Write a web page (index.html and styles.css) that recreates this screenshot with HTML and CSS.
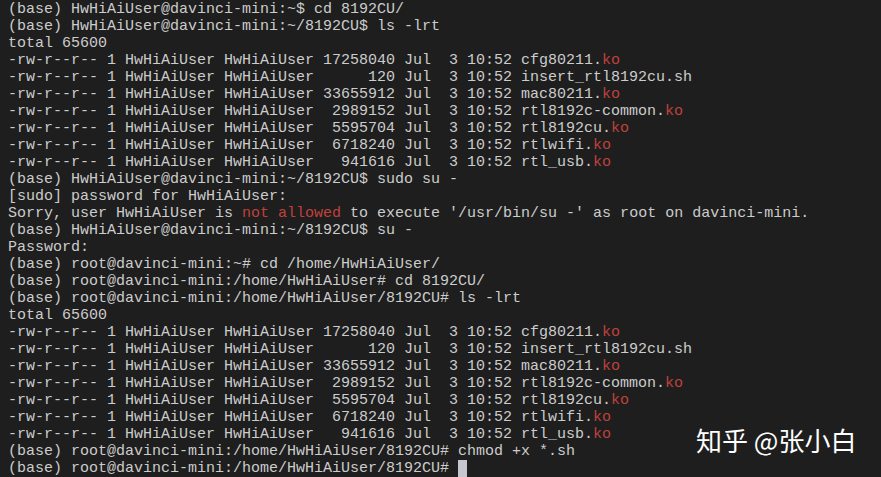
FILE: index.html
```html
<!DOCTYPE html>
<html>
<head>
<meta charset="utf-8">
<link rel="stylesheet" href="styles.css">
</head>
<body>
<div class="term">
<pre class="out">(base) HwHiAiUser@davinci-mini:~$ cd 8192CU/
(base) HwHiAiUser@davinci-mini:~/8192CU$ ls -lrt
total 65600
-rw-r--r-- 1 HwHiAiUser HwHiAiUser 17258040 Jul  3 10:52 cfg80211.<span class="red">ko</span>
-rw-r--r-- 1 HwHiAiUser HwHiAiUser      120 Jul  3 10:52 insert_rtl8192cu.sh
-rw-r--r-- 1 HwHiAiUser HwHiAiUser 33655912 Jul  3 10:52 mac80211.<span class="red">ko</span>
-rw-r--r-- 1 HwHiAiUser HwHiAiUser  2989152 Jul  3 10:52 rtl8192c-common.<span class="red">ko</span>
-rw-r--r-- 1 HwHiAiUser HwHiAiUser  5595704 Jul  3 10:52 rtl8192cu.<span class="red">ko</span>
-rw-r--r-- 1 HwHiAiUser HwHiAiUser  6718240 Jul  3 10:52 rtlwifi.<span class="red">ko</span>
-rw-r--r-- 1 HwHiAiUser HwHiAiUser   941616 Jul  3 10:52 rtl_usb.<span class="red">ko</span>
(base) HwHiAiUser@davinci-mini:~/8192CU$ sudo su -
[sudo] password for HwHiAiUser:
Sorry, user HwHiAiUser is <span class="red">not allowed</span> to execute '/usr/bin/su -' as root on davinci-mini.
(base) HwHiAiUser@davinci-mini:~/8192CU$ su -
Password:
(base) root@davinci-mini:~# cd /home/HwHiAiUser/
(base) root@davinci-mini:/home/HwHiAiUser# cd 8192CU/
(base) root@davinci-mini:/home/HwHiAiUser/8192CU# ls -lrt
total 65600
-rw-r--r-- 1 HwHiAiUser HwHiAiUser 17258040 Jul  3 10:52 cfg80211.<span class="red">ko</span>
-rw-r--r-- 1 HwHiAiUser HwHiAiUser      120 Jul  3 10:52 insert_rtl8192cu.sh
-rw-r--r-- 1 HwHiAiUser HwHiAiUser 33655912 Jul  3 10:52 mac80211.<span class="red">ko</span>
-rw-r--r-- 1 HwHiAiUser HwHiAiUser  2989152 Jul  3 10:52 rtl8192c-common.<span class="red">ko</span>
-rw-r--r-- 1 HwHiAiUser HwHiAiUser  5595704 Jul  3 10:52 rtl8192cu.<span class="red">ko</span>
-rw-r--r-- 1 HwHiAiUser HwHiAiUser  6718240 Jul  3 10:52 rtlwifi.<span class="red">ko</span>
-rw-r--r-- 1 HwHiAiUser HwHiAiUser   941616 Jul  3 10:52 rtl_usb.<span class="red">ko</span>
(base) root@davinci-mini:/home/HwHiAiUser/8192CU# chmod +x *.sh
(base) root@davinci-mini:/home/HwHiAiUser/8192CU# <span class="cursor"> </span></pre>
<div class="mark">知乎 @张小白</div>
</div>
</body>
</html>
```
FILE: styles.css
```css
html, body {
  margin: 0;
  padding: 0;
  background: #1e1e1e;
}
.term {
  position: relative;
  width: 881px;
  height: 477px;
  overflow: hidden;
  background: #1e1e1e;
}
.out {
  margin: 0;
  padding: 1px 0 0 8px;
  font-family: "Liberation Mono", monospace;
  font-size: 15px;
  line-height: 17px;
  color: #cccccc;
  white-space: pre;
}
.red {
  color: #c0413b;
}
.cursor {
  display: inline-block;
  width: 9px;
  height: 17px;
  vertical-align: top;
  background: #c6c6ce;
}
.mark {
  position: absolute;
  left: 696px;
  top: 424px;
  font-family: "Noto Sans CJK SC", sans-serif;
  font-size: 26px;
  line-height: 32px;
  color: #ffffff;
  white-space: nowrap;
}
```
